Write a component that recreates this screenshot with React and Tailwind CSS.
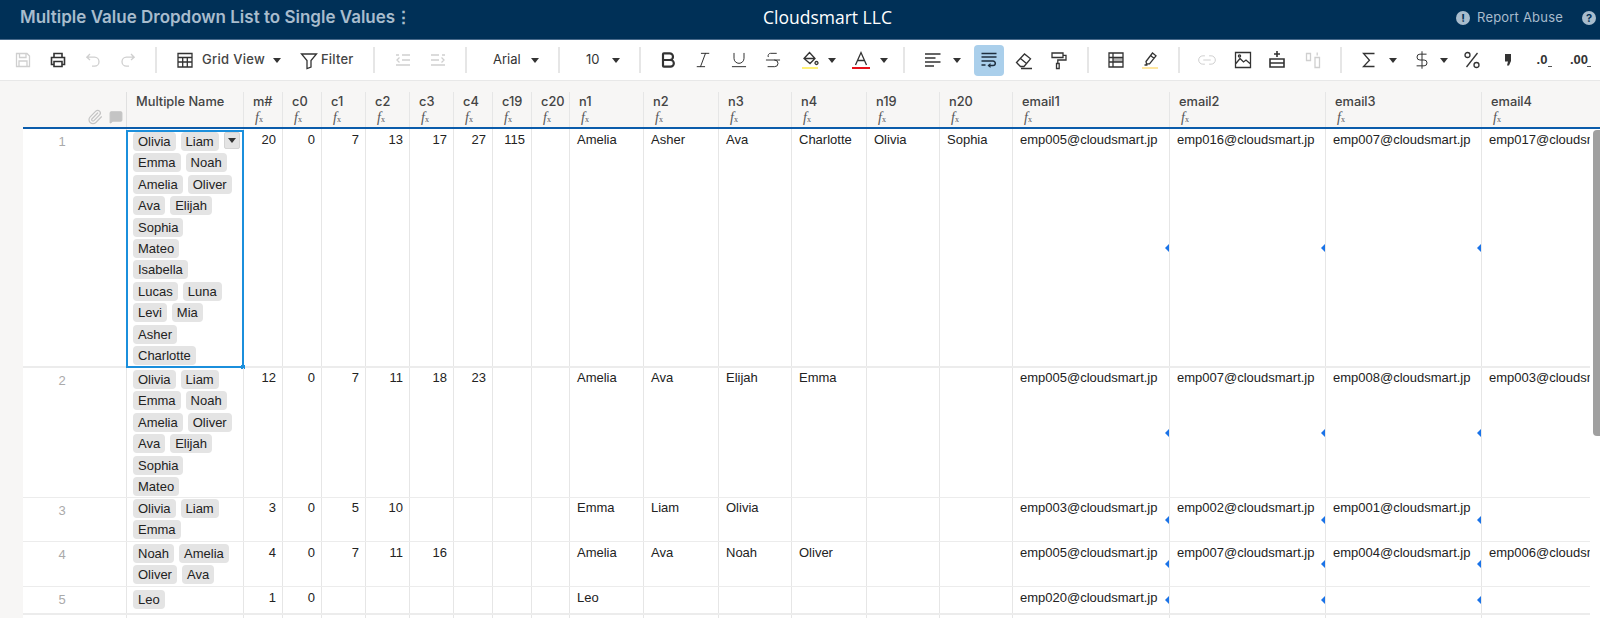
import { Paperclip, MessageSquare, Bold, Italic, Underline, Strikethrough, DollarSign, Link2 } from 'lucide-react';

const colWidths = [
  'w-[117px]', 'w-[39px]', 'w-[39px]', 'w-[44px]', 'w-[44px]', 'w-[44px]', 'w-[39px]', 'w-[39px]', 'w-[38px]',
  'w-[74px]', 'w-[75px]', 'w-[73px]', 'w-[75px]', 'w-[73px]', 'w-[73px]',
  'w-[157px]', 'w-[156px]', 'w-[156px]', 'w-[156px]',
];

const headers = ['Multiple Name', 'm#', 'c0', 'c1', 'c2', 'c3', 'c4', 'c19', 'c20', 'n1', 'n2', 'n3', 'n4', 'n19', 'n20', 'email1', 'email2', 'email3', 'email4'];

const mail = (n) => (n ? `emp${n}@cloudsmart.jp` : '');

const rows = [
  {
    id: 1, height: 'h-[239px]', line: 'border-b-2', pad: 'pt-[3px]', textPad: 'pt-px',
    names: ['Olivia', 'Liam', 'Emma', 'Noah', 'Amelia', 'Oliver', 'Ava', 'Elijah', 'Sophia', 'Mateo', 'Isabella', 'Lucas', 'Luna', 'Levi', 'Mia', 'Asher', 'Charlotte'],
    nums: ['20', '0', '7', '13', '17', '27', '115', ''],
    people: ['Amelia', 'Asher', 'Ava', 'Charlotte', 'Olivia', 'Sophia'],
    mails: ['005', '016', '007', '017'],
  },
  {
    id: 2, height: 'h-[130px]', line: 'border-b', pad: 'pt-[2px]', textPad: '',
    names: ['Olivia', 'Liam', 'Emma', 'Noah', 'Amelia', 'Oliver', 'Ava', 'Elijah', 'Sophia', 'Mateo'],
    nums: ['12', '0', '7', '11', '18', '23', '', ''],
    people: ['Amelia', 'Ava', 'Elijah', 'Emma', '', ''],
    mails: ['005', '007', '008', '003'],
  },
  {
    id: 3, height: 'h-[44px]', line: 'border-b', pad: 'pt-[1px]', textPad: '',
    names: ['Olivia', 'Liam', 'Emma'],
    nums: ['3', '0', '5', '10', '', '', '', ''],
    people: ['Emma', 'Liam', 'Olivia', '', '', ''],
    mails: ['003', '002', '001', ''],
  },
  {
    id: 4, height: 'h-[45px]', line: 'border-b', pad: 'pt-[2px]', textPad: 'pt-px',
    names: ['Noah', 'Amelia', 'Oliver', 'Ava'],
    nums: ['4', '0', '7', '11', '16', '', '', ''],
    people: ['Amelia', 'Ava', 'Noah', 'Oliver', '', ''],
    mails: ['005', '007', '004', '006'],
  },
  {
    id: 5, height: 'h-[28px]', line: 'border-b-2', pad: 'pt-[3px]', textPad: 'pt-px',
    names: ['Leo'],
    nums: ['1', '0', '', '', '', '', '', ''],
    people: ['Leo', '', '', '', '', ''],
    mails: ['020', '', '', ''],
  },
  {
    id: '', height: 'h-[40px]', line: 'border-b', pad: 'pt-[1px]', textPad: '',
    names: [],
    nums: ['', '', '', '', '', '', '', ''],
    people: ['', '', '', '', '', ''],
    mails: ['', '', '', ''],
    noMarks: true,
  },
];

function Icon({ children, className = '' }) {
  return (
    <svg width="20" height="20" viewBox="0 0 20 20" fill="none" stroke="currentColor" strokeWidth="1.3" className={`shrink-0 ${className}`}>
      {children}
    </svg>
  );
}

function Caret({ className = '' }) {
  return (
    <svg width="8" height="5" viewBox="0 0 8 5" className={`shrink-0 text-[#333] ${className}`}>
      <path d="M0 0h8L4 5z" fill="currentColor" />
    </svg>
  );
}

function Sep({ className = '' }) {
  return <div className={`w-[2px] h-[26px] bg-[#e6e6e6] shrink-0 ${className}`}></div>;
}

function Toolbar() {
  return (
    <div className="h-[41px] flex items-center bg-white border-b border-[#e8e8e8] text-[#333] shrink-0 overflow-hidden">
      <Icon className="ml-[13px] text-[#cfcfcf]">
        <path d="M3.5 3.5H14L16.5 6v10.5h-13z M6.5 3.5v4H13v-4 M6 16.5V11h8v5.5" />
      </Icon>
      <Icon className="ml-[15px]">
        <path strokeWidth="1.6" d="M6 7V3.5h8V7 M6 14.5H3.5v-7h13v7H14 M6 11.5h8v5H6z" />
      </Icon>
      <Icon className="ml-[15px] text-[#cfcfcf]">
        <path d="M7 4 3.8 7.2 7 10 M4 7.2h7.5a4.5 4.5 0 0 1 0 9H9" />
      </Icon>
      <Icon className="ml-[15px] text-[#cfcfcf]">
        <path d="M13 4l3.2 3.2L13 10 M16 7.2H8.5a4.5 4.5 0 0 0 0 9H11" />
      </Icon>
      <Sep className="ml-[17px]" />
      <Icon className="ml-[18px]">
        <path d="M3 3.5h14V17H3z M3 7.5h14 M3 12h14 M7.7 7.5V17 M12.3 7.5V17" />
      </Icon>
      <span className="ml-[7px] w-[60px] shrink-0 whitespace-nowrap text-[13px] text-[#444] font-medium tracking-[0.3px] font-['Inter',sans-serif]">Grid View</span>
      <Caret className="ml-[11px]" />
      <Icon className="ml-[18px]">
        <path d="M2.5 4h15L12 10.5V17l-4 1.5v-8z" />
      </Icon>
      <span className="ml-[2px] w-[31px] shrink-0 whitespace-nowrap text-[13px] text-[#444] font-medium tracking-[0.2px] font-['Inter',sans-serif]">Filter</span>
      <Sep className="ml-[21px]" />
      <Icon className="ml-[18px] text-[#cfcfcf]">
        <path d="M9 5h8 M9 10h8 M3 15h14 M3 5h3 M6.5 7.5 4 10l2.5 2.5" />
      </Icon>
      <Icon className="ml-[15px] text-[#cfcfcf]">
        <path d="M3 5h8 M3 10h8 M3 15h14 M14 5h3 M13.5 7.5 16 10l-2.5 2.5" />
      </Icon>
      <Sep className="ml-[17px]" />
      <span className="ml-[26px] w-[26px] shrink-0 text-[13px] text-[#333] font-['Inter',sans-serif]">Arial</span>
      <Caret className="ml-[12px]" />
      <Sep className="ml-[19px]" />
      <span className="ml-[26px] w-[14px] shrink-0 text-[13px] text-[#333] font-['Inter',sans-serif]">10</span>
      <Caret className="ml-[12px]" />
      <Sep className="ml-[19px]" />
      <Bold size={20} strokeWidth={2.6} className="ml-[17px] shrink-0" />
      <Italic size={20} strokeWidth={1.2} className="ml-[15px] shrink-0" />
      <Underline size={20} strokeWidth={1.2} className="ml-[16px] shrink-0" />
      <Strikethrough size={20} strokeWidth={1.2} className="ml-[14px] shrink-0" />
      <Icon className="ml-[17px]">
        <path d="M9.5 2.5 15 8.500 10 13.5 4 8.500z M4 8.500h11 M16.5 11.5a1.5 1.5 0 1 1-.01 0z" />
        <path d="M2 18h16" stroke="#fff176" strokeWidth="2" />
      </Icon>
      <Caret className="ml-[8px]" />
      <Icon className="ml-[15px]">
        <path d="M4.5 15 10 2.5 15.5 15 M6.5 10.5h7" />
        <path d="M1 18h18" stroke="#e8101a" strokeWidth="2" />
      </Icon>
      <Caret className="ml-[9px]" />
      <Sep className="ml-[15px]" />
      <Icon className="ml-[18px]">
        <path d="M2 4h15.5 M2 8h10.5 M2 12h15.5 M2 16h9" />
      </Icon>
      <Caret className="ml-[10px]" />
      <div className="ml-[13px] w-[30px] h-[31px] rounded-[4px] bg-[#aacfeb] flex items-center justify-center shrink-0">
        <Icon className="text-[#1f2f3f]">
          <path strokeWidth="1.5" d="M2.5 3.5h15 M2.5 7h15 M2.5 11H14a2.3 2.3 0 0 1 0 4.600H9.5 M2.5 15h4" />
          <path d="M11.5 13v5l-3-2.5z" fill="currentColor" stroke="none" />
        </Icon>
      </div>
      <Icon className="ml-[10px]">
        <path d="M2.5 12.500 10.5 4l6 4.800-6.500 7.700h-3.500z M6.5 8.500l6 5 M7 18.500h11" />
      </Icon>
      <Icon className="ml-[15px]">
        <path d="M3 3h11v4.500H3z M14 5.300h3V10H8.800v3.500 M7.500 13.500h2.700v5H7.500z" />
      </Icon>
      <Sep className="ml-[18px]" />
      <Icon className="ml-[17px]">
        <path d="M7 7.500h10V12H7z" fill="#b5b5b5" stroke="none" />
        <path d="M3 3h14v14H3z M3 7.500h14 M3 12h14 M7 3v14" />
      </Icon>
      <Icon className="ml-[14px]">
        <path d="M6 11.500 12.500 3 16 5.800l-6.500 8h-3z M10.500 5.500 14 8.300 M4.500 15h3" />
        <path d="M2 18h16" stroke="#ffe6a0" strokeWidth="2" />
      </Icon>
      <Sep className="ml-[18px]" />
      <Link2 size={20} strokeWidth={1.2} className="ml-[17px] shrink-0 text-[#cfcfcf]" />
      <Icon className="ml-[16px]">
        <path d="M2.500 2.500h15v15h-15z M2.500 14 7 8.500l3.500 3.500 2.500-2 4.500 4" />
        <circle cx="6.500" cy="6" r="1.100" />
      </Icon>
      <Icon className="ml-[14px]">
        <path strokeWidth="1.6" d="M10 1v6 M7 4h6 M3 9h14v8H3z M3 13h14" />
      </Icon>
      <Icon className="ml-[16px] text-[#cfcfcf]">
        <path d="M3.500 3.500h4v7h-4z M12 7.500h4.500v10H12z M14.200 2.500v3" />
      </Icon>
      <Sep className="ml-[17px]" />
      <Icon className="ml-[17px]">
        <path d="M15.500 3.500h-11l6 6.700-6 6.300h11" />
      </Icon>
      <Caret className="ml-[10px]" />
      <DollarSign size={20} strokeWidth={1.2} className="ml-[15px] shrink-0" />
      <Caret className="ml-[8px]" />
      <Icon className="ml-[14px]">
        <path d="M15.500 3 4.500 17" />
        <circle cx="5.500" cy="5" r="2.500" />
        <circle cx="14.500" cy="15" r="2.500" />
      </Icon>
      <Icon className="ml-[16px]">
        <path d="M7 4h6v7l-2 4.500H9l1-4H7z" fill="currentColor" stroke="none" />
      </Icon>
      <div className="ml-[14px] w-[20px] relative text-center text-[13px] leading-[16px] font-bold text-[#333] shrink-0">
        .0
        <span className="absolute right-0 bottom-px w-[4px] h-px bg-[#555]"></span>
      </div>
      <div className="ml-[17px] w-[20px] relative text-center text-[13px] leading-[16px] font-bold text-[#333] shrink-0">
        .00
        <span className="absolute -right-[2px] bottom-px w-[4px] h-px bg-[#555]"></span>
      </div>
    </div>
  );
}

function Nav() {
  return (
    <div className="h-[40px] bg-[#003057] border-b border-[#48698a] flex items-center shrink-0">
      <div className="ml-[20px] w-[386px] shrink-0 flex items-center justify-between pb-[4px] text-[17px] font-semibold text-[#a8bccd] font-['Inter',sans-serif] whitespace-nowrap">
        <span>Multiple Value Dropdown List to Single Values</span>
        <span className="font-bold">⋮</span>
      </div>
      <span className="ml-[357px] pb-[4px] text-[17.5px] font-medium text-white font-['Open_Sans',sans-serif] whitespace-nowrap">Cloudsmart LLC</span>
      <div className="ml-auto mr-[4px] flex items-center pb-[3px] font-['Inter',sans-serif] text-[#a8bccd]">
        <span className="w-[14px] h-[14px] rounded-full bg-[#a8bccd] text-[#003057] text-[11px] leading-[14px] font-bold text-center">!</span>
        <span className="ml-[7px] text-[13px] tracking-[0.2px]">Report Abuse</span>
        <span className="ml-[19px] w-[14px] h-[14px] rounded-full bg-[#a8bccd] text-[#003057] text-[11px] leading-[14px] font-bold text-center">?</span>
      </div>
    </div>
  );
}

function Pill({ name }) {
  return <span className="h-[19px] px-[5px] rounded-[4px] bg-[#e4e4e4] text-[13px] leading-[20px] text-[#222]">{name}</span>;
}

function Row({ row }) {
  const values = [...row.nums, ...row.people, ...row.mails.map(mail)];
  return (
    <div className={`flex ${row.height} ${row.line} border-[#ececec] w-max`}>
      <div className="w-[104px] border-r border-[#e6e6e6] text-center pr-[25px] pt-[3px] text-[13px] leading-[20px] text-[#aaaaaa] shrink-0">{row.id}</div>
      <div className={`${colWidths[0]} relative border-r border-[#e6e6e6] shrink-0 pl-[6px] ${row.pad}`}>
        <div className="w-[99px] flex flex-wrap gap-x-[5px] gap-y-[2.4px]">
          {row.names.map((n, i) => <Pill key={i} name={n} />)}
        </div>
        {row.id === 1 && (
          <>
            <div className="absolute top-[1px] -left-px -right-px -bottom-[2px] border-2 border-[#1b8fdc]"></div>
            <div className="absolute -right-[2px] -bottom-[3px] w-[4px] h-[4px] bg-[#1b8fdc]"></div>
            <div className="absolute top-[3px] right-[3px] w-[16px] h-[17px] rounded-[2px] bg-[#e4e4e4] border border-[#d4d4d4] flex items-center justify-center">
              <Caret />
            </div>
          </>
        )}
      </div>
      {values.map((v, i) => {
        const isNum = i < 8;
        const isMarked = i >= 14 && i <= 16 && !row.noMarks;
        return (
          <div
            key={i}
            className={`${colWidths[i + 1]} relative border-r border-[#e6e6e6] shrink-0 text-[13px] leading-[20px] text-[#222] whitespace-nowrap overflow-hidden ${isNum ? 'text-right pr-[6px]' : 'pl-[7px]'} ${row.textPad}`}
          >
            {v}
            {isMarked && (
              <span className="absolute right-0 top-1/2 -translate-y-1/2 w-0 h-0 border-y-[4px] border-y-transparent border-r-[4px] border-r-[#1a73e8]"></span>
            )}
          </div>
        );
      })}
    </div>
  );
}

export default function App() {
  return (
    <div className="w-[1600px] h-[618px] overflow-hidden bg-white flex flex-col font-['Liberation_Sans',sans-serif] relative">
      <Nav />
      <Toolbar />

      {/* column headers */}
      <div className="h-[48px] bg-[#f7f6f5] shrink-0 pl-[23px] overflow-hidden">
        <div className="flex h-[46px] w-max">
          <div className="w-[104px] pt-[11px] shrink-0 flex justify-end">
            <div className="h-[35px] w-full border-r border-[#e0e0e0] flex items-end justify-end gap-[6px] pr-[3px] pb-[2px] text-[#c4c4c4]">
              <Paperclip size={16} strokeWidth={1.8} />
              <MessageSquare size={14} fill="currentColor" className="mb-[1px]" />
            </div>
          </div>
          {headers.map((h, i) => (
            <div key={h} className={`${colWidths[i]} shrink-0 pt-[11px]`}>
              <div className="h-[35px] border-r border-[#e6e6e6] pl-[9px] text-[12.8px] leading-[19px] text-[#444] font-medium font-['Inter',sans-serif] whitespace-nowrap">
                <div>{h}</div>
                {i > 0 && (
                  <div className="pl-[2px] text-[#555] text-[14px] leading-[14px] italic font-['Liberation_Serif',serif]">
                    f<span className="text-[8px] not-italic">x</span>
                  </div>
                )}
              </div>
            </div>
          ))}
        </div>
        <div className="h-[2px] bg-[#0b5cab]"></div>
      </div>

      {/* grid */}
      <div className="flex flex-1 min-h-0">
        <div className="w-[23px] bg-[#f7f6f5] shrink-0"></div>
        <div className="w-[1567px] overflow-hidden">
          {rows.map((row, i) => <Row key={i} row={row} />)}
        </div>
      </div>

      {/* scrollbar thumb */}
      <div className="absolute right-0 top-[130px] w-[7px] h-[306px] rounded-l-[4px] bg-[#a0a0a0]"></div>
    </div>
  );
}
